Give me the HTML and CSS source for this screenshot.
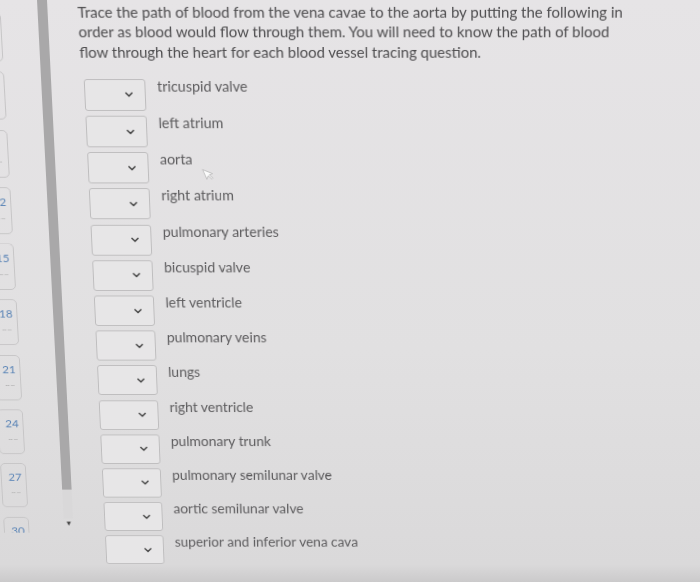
FILE: index.html
```html
<!DOCTYPE html>
<html lang="en">
<head>
    <meta charset="UTF-8">
    <meta name="viewport" content="width=device-width, initial-scale=1.0">
    <title>Blood flow tracing</title>
    <link rel="stylesheet" href="styles.css">
</head>
<body>
    <div class="screen">
        <aside class="nav">
            <ul class="tiles">
                <li class="tile"><span class="num">3</span><span class="dash">-- --</span></li>
                <li class="tile"><span class="num">6</span><span class="dash">-- --</span></li>
                <li class="tile"><span class="num">9</span><span class="dash">-- --</span></li>
                <li class="tile"><span class="num">12</span><span class="dash">-- --</span></li>
                <li class="tile"><span class="num">15</span><span class="dash">-- --</span></li>
                <li class="tile"><span class="num">18</span><span class="dash">-- --</span></li>
                <li class="tile"><span class="num">21</span><span class="dash">-- --</span></li>
                <li class="tile"><span class="num">24</span><span class="dash">-- --</span></li>
                <li class="tile"><span class="num">27</span><span class="dash">-- --</span></li>
                <li class="tile"><span class="num">30</span><span class="dash">-- --</span></li>
            </ul>
            <div class="scroll">
                <div class="track"><div class="thumb"></div></div>
                <span class="arrow">&#9662;</span>
            </div>
        </aside>

        <main class="question">
            <p class="prompt">Trace the path of blood from the vena cavae to the aorta by putting the following in order as blood would flow through them. You will need to know the path of blood flow through the heart for each blood vessel tracing question.</p>
            <ol class="steps">
                <li class="step"><span class="select"><svg viewBox="0 0 8 6"><polyline points="1,1.5 4,4.5 7,1.5"/></svg></span><span class="label">tricuspid valve</span></li>
                <li class="step"><span class="select"><svg viewBox="0 0 8 6"><polyline points="1,1.5 4,4.5 7,1.5"/></svg></span><span class="label">left atrium</span></li>
                <li class="step"><span class="select"><svg viewBox="0 0 8 6"><polyline points="1,1.5 4,4.5 7,1.5"/></svg></span><span class="label">aorta</span></li>
                <li class="step"><span class="select"><svg viewBox="0 0 8 6"><polyline points="1,1.5 4,4.5 7,1.5"/></svg></span><span class="label">right atrium</span></li>
                <li class="step"><span class="select"><svg viewBox="0 0 8 6"><polyline points="1,1.5 4,4.5 7,1.5"/></svg></span><span class="label">pulmonary arteries</span></li>
                <li class="step"><span class="select"><svg viewBox="0 0 8 6"><polyline points="1,1.5 4,4.5 7,1.5"/></svg></span><span class="label">bicuspid valve</span></li>
                <li class="step"><span class="select"><svg viewBox="0 0 8 6"><polyline points="1,1.5 4,4.5 7,1.5"/></svg></span><span class="label">left ventricle</span></li>
                <li class="step"><span class="select"><svg viewBox="0 0 8 6"><polyline points="1,1.5 4,4.5 7,1.5"/></svg></span><span class="label">pulmonary veins</span></li>
                <li class="step"><span class="select"><svg viewBox="0 0 8 6"><polyline points="1,1.5 4,4.5 7,1.5"/></svg></span><span class="label">lungs</span></li>
                <li class="step"><span class="select"><svg viewBox="0 0 8 6"><polyline points="1,1.5 4,4.5 7,1.5"/></svg></span><span class="label">right ventricle</span></li>
                <li class="step"><span class="select"><svg viewBox="0 0 8 6"><polyline points="1,1.5 4,4.5 7,1.5"/></svg></span><span class="label">pulmonary trunk</span></li>
                <li class="step"><span class="select"><svg viewBox="0 0 8 6"><polyline points="1,1.5 4,4.5 7,1.5"/></svg></span><span class="label">pulmonary semilunar valve</span></li>
                <li class="step"><span class="select"><svg viewBox="0 0 8 6"><polyline points="1,1.5 4,4.5 7,1.5"/></svg></span><span class="label">aortic semilunar valve</span></li>
                <li class="step"><span class="select"><svg viewBox="0 0 8 6"><polyline points="1,1.5 4,4.5 7,1.5"/></svg></span><span class="label">superior and inferior vena cava</span></li>
            </ol>
        </main>

        <!-- mouse pointer -->
        <svg class="cursor" viewBox="0 0 10 16"><path d="M1 1 L1 13 L4 10 L6.5 15 L8 14.3 L5.6 9.4 L9.5 9.4 Z"/></svg>
    </div>
</body>
</html>
```

FILE: styles.css
```css
html, body {
    height: 100%;
}
body {
    margin: 0;
    overflow: hidden;
    font-family: Lato, "Open Sans", sans-serif;
    background: linear-gradient(to bottom, #e6e4e6 0%, #e1e0e1 60%, #dad9da 97%, #cbcacb 100%);
}

/* the page is seen at a slight tilt */
.screen {
    position: relative;
    display: flex;
    width: 780px;
    height: 640px;
    margin-left: -40px;
    transform-origin: 390px 0;
    transform: skewX(1deg) perspective(1628px) rotateX(-10deg);
}

/* question list on the left */
.nav {
    display: flex;
    width: 88px;
    height: 574px;
    overflow: hidden;
    flex-shrink: 0;
}
.tiles {
    list-style: none;
    margin: 0;
    padding: 13px 0 0 13px;
    width: 27px;
}
.tile {
    display: flex;
    flex-direction: column;
    align-items: center;
    box-sizing: border-box;
    width: 27px;
    height: 50px;
    margin-bottom: 10.3px;
    padding: 8px 0 0 3px;
    border: 1px solid #c6c5c6;
    border-radius: 5px;
}
.num {
    font-size: 12px;
    line-height: 14px;
    color: #5a84b6;
}
.dash {
    margin-top: 6px;
    font-size: 7px;
    line-height: 8px;
    letter-spacing: -0.5px;
    color: #a0a0a0;
}
.scroll {
    display: flex;
    flex-direction: column;
    align-items: center;
    margin-left: auto;
    margin-right: 1px;
    width: 10px;
}
.track {
    width: 10px;
    height: 558px;
    background: #d9d8d9;
}
.thumb {
    height: 525px;
    background: #a9a8a9;
}
.arrow {
    font-size: 9px;
    line-height: 10px;
    color: #444;
}

/* question body */
.question {
    padding-left: 29px;
}
.prompt {
    width: 556px;
    margin: 0;
    padding-top: 2px;
    font-size: 15px;
    line-height: 20.4px;
    color: #4e4d4f;
}
.steps {
    list-style: none;
    margin: 17.7px 0 0;
    padding: 0 0 0 2.6px;
}
.step {
    display: flex;
    align-items: flex-start;
    gap: 11.5px;
    height: 33px;
    margin-bottom: 5.2px;
}
.select {
    display: flex;
    align-items: center;
    justify-content: flex-end;
    box-sizing: border-box;
    width: 62.6px;
    height: 33px;
    padding-right: 12px;
    border: 1px solid #bebdbe;
    border-radius: 3px;
    background: #e7e6e7;
}
.select svg {
    width: 8px;
    height: 6px;
    fill: none;
    stroke: #4a4a4a;
    stroke-width: 1.7;
    stroke-linecap: round;
    stroke-linejoin: round;
}
.label {
    font-size: 14.5px;
    line-height: 15px;
    color: #5d5c5e;
}

.cursor {
    position: absolute;
    left: 238px;
    top: 172px;
    width: 9px;
    height: 16px;
    transform: rotate(-22deg);
    fill: #fbfbfb;
    stroke: #a4a4a4;
    stroke-width: 0.6;
}
```
